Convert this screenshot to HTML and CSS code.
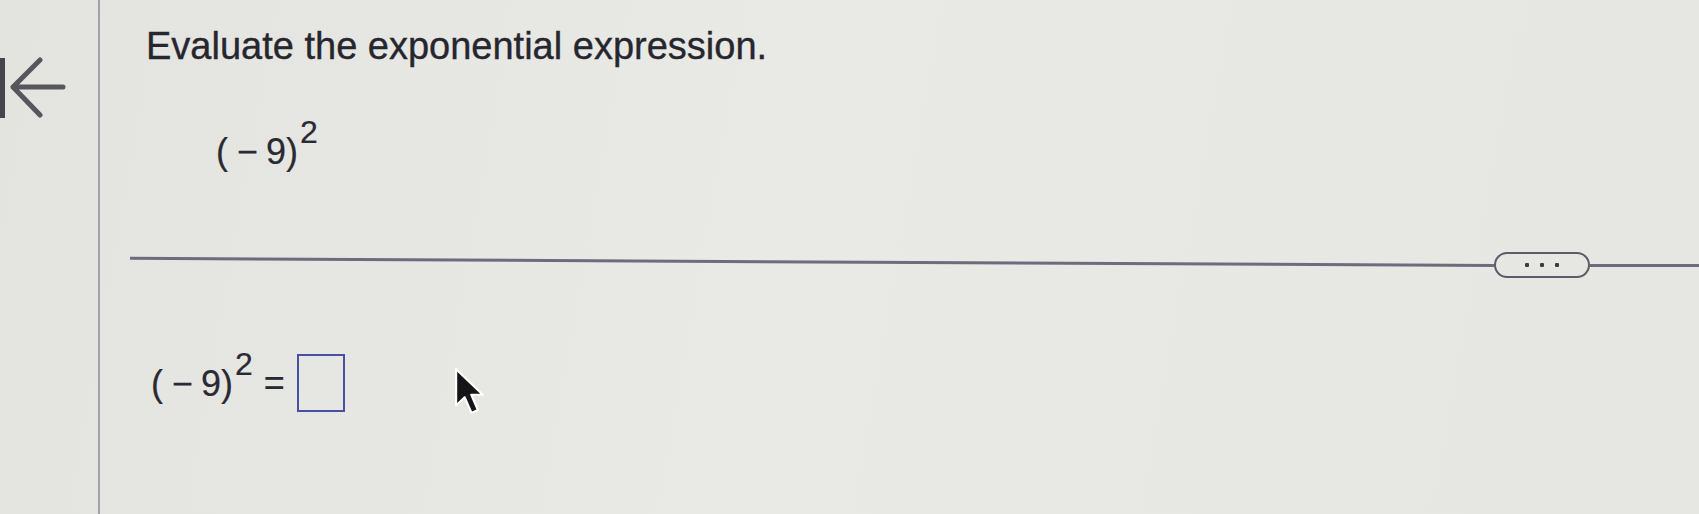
FILE: index.html
```html
<!DOCTYPE html>
<html lang="en">
<head>
<meta charset="utf-8">
<title>Evaluate the exponential expression</title>
<link rel="stylesheet" href="styles.css">
</head>
<body>
<div class="page">
  <aside class="sidebar">
    <div class="back">
      <span class="back-bar"></span>
      <svg class="back-arrow" width="60" height="62" viewBox="0 0 60 62">
        <path d="M56 30 H6 M33 3 L6 30 L33 58" fill="none" stroke="#56565c" stroke-width="5" stroke-linecap="round" stroke-linejoin="round"/>
      </svg>
    </div>
  </aside>
  <main class="main">
    <h1 class="title">Evaluate the exponential expression.</h1>
    <div class="expr">(<span class="minus">−</span>9)<sup class="sup">2</sup></div>
    <div class="divider">
      <span class="rule rule-left"></span>
      <button class="more" type="button"><span class="dot"></span><span class="dot"></span><span class="dot"></span></button>
      <span class="rule rule-right"></span>
    </div>
    <div class="answer">
      <span class="answer-expr">(<span class="minus">−</span>9)<sup class="sup">2</sup></span>
      <span class="equals">=</span>
      <span class="answer-box"></span>
    </div>
  </main>
  <svg class="cursor" width="32" height="48" viewBox="0 0 15 22.5">
    <path d="M1 1 L1 18 L5 14.2 L8.2 21.5 L11.2 20.2 L8.1 13 L13.5 13 Z" fill="#151518" stroke="#ffffff" stroke-width="1" stroke-linejoin="round"/>
  </svg>
</div>
</body>
</html>
```

FILE: styles.css
```css
html, body {
  margin: 0;
  padding: 0;
}

body {
  background: #e6e6e2;
  font-family: "Liberation Sans", Arial, sans-serif;
  color: #2a2a32;
  overflow: hidden;
}

.page {
  position: relative;
  display: flex;
  width: 1699px;
  height: 514px;
  background: linear-gradient(100deg, #e3e3df 0%, #e9e9e6 45%, #e6e6e3 100%);
}

.sidebar {
  width: 98px;
  flex: none;
  border-right: 2px solid #a2a2ad;
}

.back {
  display: flex;
  align-items: center;
  margin-top: 58px;
  height: 60px;
}

.back-bar {
  width: 5px;
  height: 60px;
  background: #45454b;
}

.back-arrow {
  margin-left: 2px;
}

.main {
  flex: 1;
  padding-top: 27px;
  padding-left: 30px;
}

.title {
  margin: 0 0 0 16px;
  font-size: 38px;
  line-height: 38px;
  font-weight: normal;
  color: #26262e;
  -webkit-text-stroke: 0.35px #26262e;
}

.expr {
  margin: 67px 0 0 86px;
  font-size: 36px;
  line-height: 36px;
  -webkit-text-stroke: 0.2px #2a2a32;
}

.minus {
  margin: 0 8px 0 9px;
}

.sup {
  font-size: 32px;
  line-height: 0;
  vertical-align: 21px;
  margin-left: 2px;
}

.divider {
  display: flex;
  align-items: center;
  height: 26px;
  margin-top: 82px;
}

.rule {
  height: 3px;
  background: #6c6c7c;
}

.rule-left {
  flex: 1;
  transform: rotate(0.3deg);
  transform-origin: right center;
}

.rule-right {
  width: 109px;
  flex: none;
}

.more {
  flex: none;
  display: flex;
  align-items: center;
  justify-content: center;
  gap: 11px;
  width: 96px;
  height: 26px;
  padding: 0;
  border: 2.5px solid #5c5c6a;
  border-radius: 13px;
  background: transparent;
  box-sizing: border-box;
}

.dot {
  width: 4px;
  height: 4px;
  border-radius: 1px;
  background: #3c3c46;
}

.answer {
  display: flex;
  align-items: center;
  height: 58px;
  margin: 76px 0 0 21px;
  font-size: 36px;
  line-height: 36px;
  -webkit-text-stroke: 0.2px #2a2a32;
}

.answer-expr {
  white-space: nowrap;
}

.equals {
  margin-left: 11px;
}

.answer-box {
  width: 48px;
  height: 58px;
  margin-left: 12px;
  border: 2px solid #4a4fa6;
  box-sizing: border-box;
  -webkit-text-stroke: 0;
}

.cursor {
  position: absolute;
  left: 454px;
  top: 367px;
}
```
